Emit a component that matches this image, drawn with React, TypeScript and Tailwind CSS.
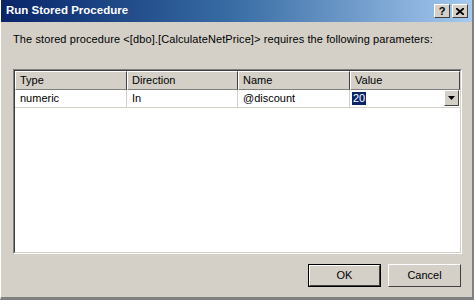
import { ReactNode } from "react";

const font = { fontFamily: '"Liberation Sans", Arial, sans-serif' };

function HeaderCell({ label, w }: { label: string; w: string }) {
  return (
    <div
      className={`${w} h-[19px] flex items-center pl-[4px] border-t border-l border-t-white border-l-white border-r border-b border-r-[#404040] border-b-[#808080] bg-[#d4d0c8] text-[11px] text-black`}>
      {label}
    </div>
  );
}

function Cell({ children, w }: { children: ReactNode; w: string }) {
  return (
    <div
      className={`${w} h-[18px] flex items-center pl-[5px] border-r border-b border-[#d4d0c8] bg-white text-[11px] text-black`}>
      {children}
    </div>
  );
}

export default function App() {
  return (
    <div
      className="w-[474px] h-[300px] bg-[#d4d0c8] flex flex-col border-l border-l-white border-r-[2px] border-r-[#808080] border-b-[3px] border-b-[#808080] overflow-hidden"
      style={font}>
      <div className="h-[22px] shrink-0 flex items-center justify-between pl-[5px] pr-[4px] bg-gradient-to-r from-[#0a246a] via-[#3a6ea5] to-[#a6caf0]">
        <span className="text-white font-bold text-[11.5px]">
          Run Stored Procedure
        </span>
        <div className="flex gap-[2px]">
          <div className="w-[16px] h-[14px] bg-[#d4d0c8] border border-t-white border-l-white border-r-[#404040] border-b-[#404040] flex items-center justify-center text-[11px] font-bold leading-none">
            ?
          </div>
          <div className="w-[16px] h-[14px] bg-[#d4d0c8] border border-t-white border-l-white border-r-[#404040] border-b-[#404040] flex items-center justify-center">
            <svg width="8" height="7" viewBox="0 0 8 7">
              <path d="M0 0 L8 7 M8 0 L0 7" stroke="black" strokeWidth="1.8" />
            </svg>
          </div>
        </div>
      </div>

      <div className="pl-[12px] pt-[9px] text-[11px] tracking-[0.1px] text-black">
        The stored procedure &lt;[dbo].[CalculateNetPrice]&gt; requires the
        following parameters:
      </div>

      <div className="ml-[12px] mt-[21px] w-[449px] h-[185px] shrink-0 border border-t-[#808080] border-l-[#808080] border-r-white border-b-white">
        <div className="w-full h-full bg-white border border-t-[#404040] border-l-[#404040] border-r-[#d4d0c8] border-b-[#d4d0c8]">
          <div className="flex">
            <HeaderCell label="Type" w="w-[112px]" />
            <HeaderCell label="Direction" w="w-[111px]" />
            <HeaderCell label="Name" w="w-[112px]" />
            <HeaderCell label="Value" w="w-[110px]" />
          </div>
          <div className="flex">
            <Cell w="w-[112px]">numeric</Cell>
            <Cell w="w-[111px]">In</Cell>
            <Cell w="w-[112px]">@discount</Cell>
            <div className="w-[110px] h-[18px] flex items-center justify-between pl-[2px] pr-[1px] bg-white border-b border-[#d4d0c8] text-[11px]">
              <span className="bg-[#0a246a] text-white px-[1px] leading-[13px]">
                20
              </span>
              <div className="w-[15px] h-[16px] bg-[#d4d0c8] border border-t-white border-l-white border-r-[#404040] border-b-[#404040] flex items-center justify-center">
                <svg width="7" height="4" viewBox="0 0 7 4">
                  <path d="M0 0 H7 L3.5 4 Z" fill="black" />
                </svg>
              </div>
            </div>
          </div>
        </div>
      </div>

      <div className="flex justify-end gap-[7px] pr-[11px] pt-[10px]">
        <button className="w-[73px] h-[23px] border border-black bg-[#d4d0c8] text-[11px]">
          <div className="w-full h-full border border-t-white border-l-white border-r-[#404040] border-b-[#404040] flex items-center justify-center">
            OK
          </div>
        </button>
        <button className="w-[73px] h-[23px] bg-[#d4d0c8] border border-t-white border-l-white border-r-[#404040] border-b-[#404040] text-[11px] flex items-center justify-center">
          Cancel
        </button>
      </div>
    </div>
  );
}
